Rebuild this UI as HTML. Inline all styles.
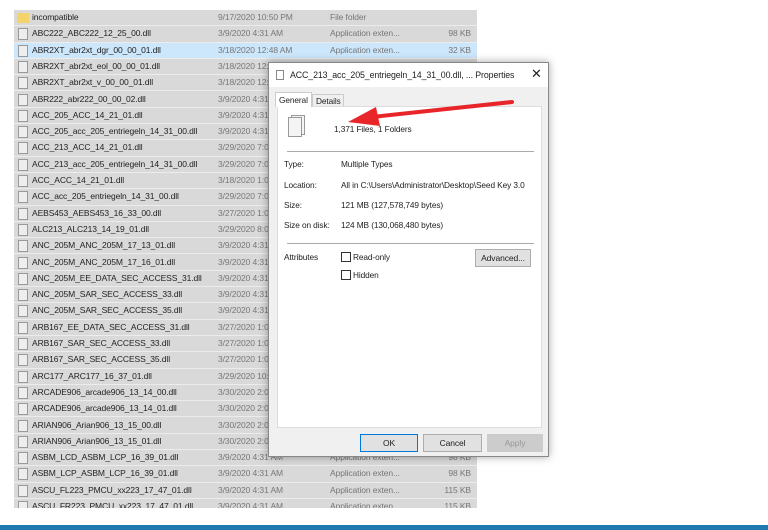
<!DOCTYPE html>
<html><head><meta charset="utf-8"><style>
*{margin:0;padding:0;box-sizing:border-box}
body{width:768px;height:530px;background:#fff;position:relative;overflow:hidden;font-family:"Liberation Sans",sans-serif;font-size:8.5px;letter-spacing:-0.1px;color:#222}
#list{position:absolute;left:14px;top:10px;width:463px;height:498px;background:#d9d9d9;overflow:hidden}
.r{position:absolute;left:0;width:463px;height:16.3px;border-bottom:1px solid #ececec;line-height:15px}
.r.sel{background:#cce6fb}
.r span{position:absolute;white-space:nowrap}
.n{left:18px;color:#222}.d{left:204px;color:#777}.t{left:316px;color:#777}.s{right:6px;color:#777}
.ic{position:absolute;left:4px;top:2px;width:10px;height:12px;border:1px solid #999;background:#eee}
.fo{position:absolute;left:3px;top:3px;width:12px;height:10px;background:#f5d36b}
#dlg{position:absolute;left:268px;top:62px;width:281px;height:395px;background:#f0f0f0;border:1px solid #888;box-shadow:0 0 8px rgba(0,0,0,.35)}
#pan{position:absolute;left:8px;top:43px;width:265px;height:322px;background:#fff;border:1px solid #ddd}
.lb{position:absolute;font-size:8.3px;color:#222;white-space:nowrap}
.btn{position:absolute;top:371px;height:18px;border:1px solid #adadad;background:#e1e1e1;font-size:8.5px;text-align:center;line-height:16px}
.cb{position:absolute;width:10px;height:10px;border:1px solid #333;background:#fff}
hr{position:absolute;border:0;border-top:1px solid #aaa;height:0}
</style></head><body>
<div id="list">
<div class="r" style="top:0"><div class="fo"></div><span class="n">incompatible</span><span class="d">9/17/2020 10:50 PM</span><span class="t">File folder</span></div>
<div class="r" style="top:16.3px"><div class="ic"></div><span class="n">ABC222_ABC222_12_25_00.dll</span><span class="d">3/9/2020 4:31 AM</span><span class="t">Application exten...</span><span class="s">98 KB</span></div>
<div class="r sel" style="top:32.6px"><div class="ic"></div><span class="n">ABR2XT_abr2xt_dgr_00_00_01.dll</span><span class="d">3/18/2020 12:48 AM</span><span class="t">Application exten...</span><span class="s">32 KB</span></div>
<div class="r" style="top:48.9px"><div class="ic"></div><span class="n">ABR2XT_abr2xt_eol_00_00_01.dll</span><span class="d">3/18/2020 12:48 AM</span></div>
<div class="r" style="top:65.2px"><div class="ic"></div><span class="n">ABR2XT_abr2xt_v_00_00_01.dll</span><span class="d">3/18/2020 12:48 AM</span></div>
<div class="r" style="top:81.5px"><div class="ic"></div><span class="n">ABR222_abr222_00_00_02.dll</span><span class="d">3/9/2020 4:31 AM</span></div>
<div class="r" style="top:97.8px"><div class="ic"></div><span class="n">ACC_205_ACC_14_21_01.dll</span><span class="d">3/9/2020 4:31 AM</span></div>
<div class="r" style="top:114.1px"><div class="ic"></div><span class="n">ACC_205_acc_205_entriegeln_14_31_00.dll</span><span class="d">3/9/2020 4:31 AM</span></div>
<div class="r" style="top:130.4px"><div class="ic"></div><span class="n">ACC_213_ACC_14_21_01.dll</span><span class="d">3/29/2020 7:00 PM</span></div>
<div class="r" style="top:146.7px"><div class="ic"></div><span class="n">ACC_213_acc_205_entriegeln_14_31_00.dll</span><span class="d">3/29/2020 7:00 PM</span></div>
<div class="r" style="top:163px"><div class="ic"></div><span class="n">ACC_ACC_14_21_01.dll</span><span class="d">3/18/2020 1:00 AM</span></div>
<div class="r" style="top:179.3px"><div class="ic"></div><span class="n">ACC_acc_205_entriegeln_14_31_00.dll</span><span class="d">3/29/2020 7:00 PM</span></div>
<div class="r" style="top:195.6px"><div class="ic"></div><span class="n">AEBS453_AEBS453_16_33_00.dll</span><span class="d">3/27/2020 1:00 AM</span></div>
<div class="r" style="top:211.9px"><div class="ic"></div><span class="n">ALC213_ALC213_14_19_01.dll</span><span class="d">3/29/2020 8:00 PM</span></div>
<div class="r" style="top:228.2px"><div class="ic"></div><span class="n">ANC_205M_ANC_205M_17_13_01.dll</span><span class="d">3/9/2020 4:31 AM</span></div>
<div class="r" style="top:244.5px"><div class="ic"></div><span class="n">ANC_205M_ANC_205M_17_16_01.dll</span><span class="d">3/9/2020 4:31 AM</span></div>
<div class="r" style="top:260.8px"><div class="ic"></div><span class="n">ANC_205M_EE_DATA_SEC_ACCESS_31.dll</span><span class="d">3/9/2020 4:31 AM</span></div>
<div class="r" style="top:277.1px"><div class="ic"></div><span class="n">ANC_205M_SAR_SEC_ACCESS_33.dll</span><span class="d">3/9/2020 4:31 AM</span></div>
<div class="r" style="top:293.4px"><div class="ic"></div><span class="n">ANC_205M_SAR_SEC_ACCESS_35.dll</span><span class="d">3/9/2020 4:31 AM</span></div>
<div class="r" style="top:309.7px"><div class="ic"></div><span class="n">ARB167_EE_DATA_SEC_ACCESS_31.dll</span><span class="d">3/27/2020 1:00 AM</span></div>
<div class="r" style="top:326px"><div class="ic"></div><span class="n">ARB167_SAR_SEC_ACCESS_33.dll</span><span class="d">3/27/2020 1:00 AM</span></div>
<div class="r" style="top:342.3px"><div class="ic"></div><span class="n">ARB167_SAR_SEC_ACCESS_35.dll</span><span class="d">3/27/2020 1:00 AM</span></div>
<div class="r" style="top:358.6px"><div class="ic"></div><span class="n">ARC177_ARC177_16_37_01.dll</span><span class="d">3/29/2020 10:00 PM</span></div>
<div class="r" style="top:374.9px"><div class="ic"></div><span class="n">ARCADE906_arcade906_13_14_00.dll</span><span class="d">3/30/2020 2:00 AM</span></div>
<div class="r" style="top:391.2px"><div class="ic"></div><span class="n">ARCADE906_arcade906_13_14_01.dll</span><span class="d">3/30/2020 2:00 AM</span></div>
<div class="r" style="top:407.5px"><div class="ic"></div><span class="n">ARIAN906_Arian906_13_15_00.dll</span><span class="d">3/30/2020 2:00 AM</span></div>
<div class="r" style="top:423.8px"><div class="ic"></div><span class="n">ARIAN906_Arian906_13_15_01.dll</span><span class="d">3/30/2020 2:00 AM</span></div>
<div class="r" style="top:440.1px"><div class="ic"></div><span class="n">ASBM_LCD_ASBM_LCP_16_39_01.dll</span><span class="d">3/9/2020 4:31 AM</span><span class="t">Application exten...</span><span class="s">98 KB</span></div>
<div class="r" style="top:456.4px"><div class="ic"></div><span class="n">ASBM_LCP_ASBM_LCP_16_39_01.dll</span><span class="d">3/9/2020 4:31 AM</span><span class="t">Application exten...</span><span class="s">98 KB</span></div>
<div class="r" style="top:472.7px"><div class="ic"></div><span class="n">ASCU_FL223_PMCU_xx223_17_47_01.dll</span><span class="d">3/9/2020 4:31 AM</span><span class="t">Application exten...</span><span class="s">115 KB</span></div>
<div class="r" style="top:489px"><div class="ic"></div><span class="n">ASCU_FR223_PMCU_xx223_17_47_01.dll</span><span class="d">3/9/2020 4:31 AM</span><span class="t">Application exten...</span><span class="s">115 KB</span></div>
</div>

<div id="dlg">
<div style="position:absolute;left:0;top:0;width:279px;height:24px;background:#fff"></div>
<div style="position:absolute;left:7px;top:7px;width:8px;height:10px;border:1px solid #888;background:#fff"></div>
<div class="lb" style="left:21px;top:7px;font-size:8.8px">ACC_213_acc_205_entriegeln_14_31_00.dll, ... Properties</div>
<div class="lb" style="left:262px;top:3px;font-size:13px">✕</div>
<div style="position:absolute;left:6px;top:29px;width:37px;height:15px;background:#fff;border:1px solid #ccc;border-bottom:0;z-index:2"></div>
<div class="lb" style="left:10px;top:32px;z-index:3">General</div>
<div style="position:absolute;left:43px;top:31px;width:32px;height:13px;border:1px solid #ccc;border-bottom:0"></div>
<div class="lb" style="left:47px;top:33px">Details</div>
<div id="pan">
<div style="position:absolute;left:10px;top:10px;width:14px;height:20px;border:1px solid #999;background:#f4f4f4;box-shadow:3px -2px 0 -1px #f4f4f4,3px -2px 0 0 #999"></div>
<div class="lb" style="left:56px;top:17px">1,371 Files, 1 Folders</div>
<hr style="left:9px;top:44px;width:247px">
<div class="lb" style="left:6px;top:52px">Type:</div><div class="lb" style="left:63px;top:52px">Multiple Types</div>
<div class="lb" style="left:6px;top:73px">Location:</div><div class="lb" style="left:63px;top:73px">All in C:\Users\Administrator\Desktop\Seed Key 3.0</div>
<div class="lb" style="left:6px;top:93px">Size:</div><div class="lb" style="left:63px;top:93px">121 MB (127,578,749 bytes)</div>
<div class="lb" style="left:6px;top:113px">Size on disk:</div><div class="lb" style="left:63px;top:113px">124 MB (130,068,480 bytes)</div>
<hr style="left:9px;top:136px;width:247px">
<div class="lb" style="left:6px;top:145px">Attributes</div>
<div class="cb" style="left:63px;top:145px"></div><div class="lb" style="left:75px;top:145px">Read-only</div>
<div class="cb" style="left:63px;top:163px"></div><div class="lb" style="left:75px;top:163px">Hidden</div>
<div class="btn" style="left:197px;top:142px;width:56px">Advanced...</div>
</div>
<div class="btn" style="left:91px;width:58px;border:1px solid #0078d7">OK</div>
<div class="btn" style="left:154px;width:59px">Cancel</div>
<div class="btn" style="left:218px;width:56px;color:#999;background:#ccc;border-color:#ccc">Apply</div>
</div>
<svg style="position:absolute;left:0;top:0" width="768" height="530"><path d="M512 102 L372 117" stroke="#e8262a" stroke-width="4" stroke-linecap="round"/><path d="M348 122 L376 107 L380 126 Z" fill="#e8262a"/></svg>
<div style="position:absolute;left:0;top:525px;width:768px;height:5px;background:#1f7ab0"></div>
</body></html>
